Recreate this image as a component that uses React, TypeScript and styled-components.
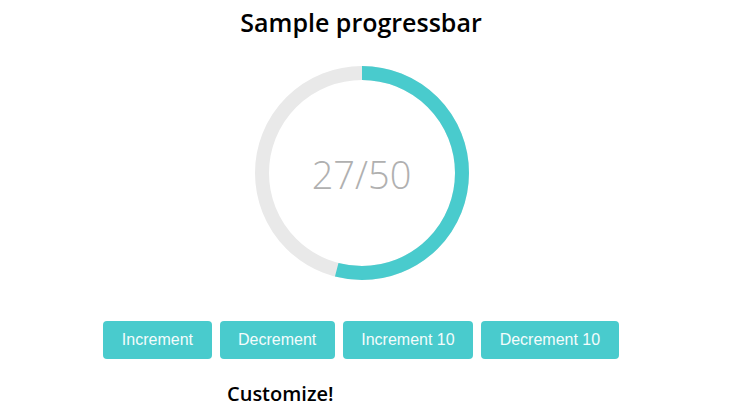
import React, { useState } from 'react'
import styled, { createGlobalStyle } from 'styled-components'

const GlobalStyle = createGlobalStyle`
    body {
        margin: 0;
        background: #ffffff;
        font-family: "Open Sans", "Liberation Sans", sans-serif;
    }
`;

const Page = styled.div`
    width: 722px;
    display: flex;
    flex-direction: column;
    align-items: center;
`;

const Title = styled.h2`
    margin: 6px 0 0;
    font-size: 25px;
    line-height: 32px;
    font-weight: 600;
    color: #000;
`;

const Ring = styled.div`
    position: relative;
    width: 214px;
    height: 214px;
    margin-top: 28px;
    margin-left: 1px;
`;

const Label = styled.div`
    position: absolute;
    inset: 0;
    display: flex;
    align-items: center;
    justify-content: center;
    padding-top: 2px;
    font-size: 38px;
    font-weight: 300;
    color: #b0b0b0;
`;

const ButtonRow = styled.div`
    display: flex;
    gap: 8px;
    margin-top: 41px;
`;

const Button = styled.button`
    height: 38px;
    padding: 0 18.5px;
    border: none;
    border-radius: 4px;
    background: #49cbcd;
    color: #f4fcfc;
    font-family: "Liberation Sans", Arial, sans-serif;
    font-size: 16px;
    cursor: pointer;
`;

const Customize = styled.section`
    width: 268px;
    margin-top: 21px;
`;

const SubTitle = styled.h3`
    margin: 0;
    font-size: 20px;
    line-height: 27px;
    font-weight: 600;
    color: #000;
`;

const SIZE = 214;
const STROKE = 14;
const R = (SIZE - STROKE) / 2;
const CIRC = 2 * Math.PI * R;

const ProgressRing: React.FC<{ value: number; max: number }> = ({ value, max }) => {
    const pct = Math.max(0, Math.min(1, value / max));
    return (
        <Ring>
            <svg width={SIZE} height={SIZE} viewBox={`0 0 ${SIZE} ${SIZE}`}>
                <circle cx={SIZE / 2} cy={SIZE / 2} r={R} fill="none" stroke="#e9e9e9" strokeWidth={STROKE} />
                <circle
                    cx={SIZE / 2}
                    cy={SIZE / 2}
                    r={R}
                    fill="none"
                    stroke="#49cbcd"
                    strokeWidth={STROKE}
                    strokeDasharray={CIRC}
                    strokeDashoffset={CIRC * (1 - pct)}
                    transform={`rotate(-90 ${SIZE / 2} ${SIZE / 2})`}
                />
            </svg>
            <Label>{`${value}/${max}`}</Label>
        </Ring>
    )
}

export default function App() {
    const [value, setValue] = useState(27);
    const max = 50;
    const change = (d: number) => setValue(v => Math.max(0, Math.min(max, v + d)));

    return (
        <Page>
            <GlobalStyle />
            <Title>Sample progressbar</Title>
            <ProgressRing value={value} max={max} />
            <ButtonRow>
                <Button onClick={() => change(1)}>Increment</Button>
                <Button onClick={() => change(-1)}>Decrement</Button>
                <Button onClick={() => change(10)}>Increment 10</Button>
                <Button onClick={() => change(-10)}>Decrement 10</Button>
            </ButtonRow>
            <Customize>
                <SubTitle>Customize!</SubTitle>
            </Customize>
        </Page>
    )
}
